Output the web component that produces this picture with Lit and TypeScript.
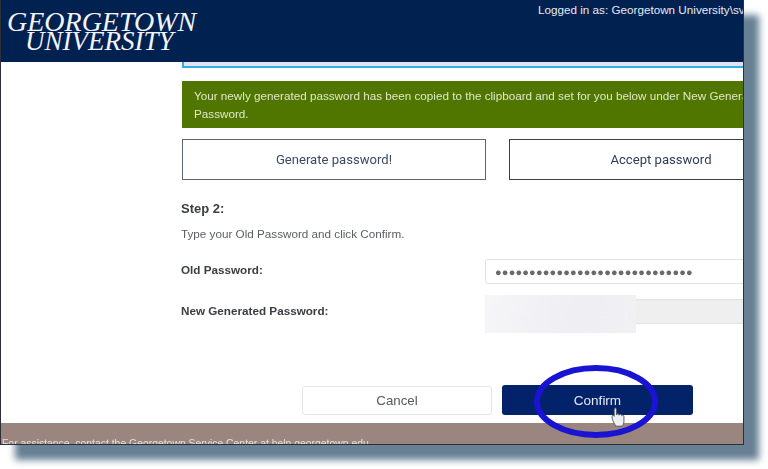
import { LitElement, html, css, svg } from "lit";
import { customElement } from "lit/decorators.js";

@customElement("app-root")
export class AppRoot extends LitElement {
  static styles = css`
    :host { display: block; width: 768px; height: 469px; background: #fff; overflow: hidden; font-family: "Liberation Sans", Arial, sans-serif; position: relative; }
    .window { width: 744px; height: 445px; box-sizing: border-box; border: 1px solid #2c3036; border-top: 0; background: #fff; display: flex; flex-direction: column; overflow: hidden; box-shadow: 15px 15px 7px 0 #678094; position: relative; }
    .soft { filter: blur(0.4px); display: flex; flex-direction: column; flex: 1; min-height: 0; }
    header { height: 62px; flex: none; background: #012150; color: #e6ebf2; position: relative; }
    .logo { font-family: "Liberation Serif", serif; font-style: italic; color: #f2f4f7; padding: 11px 0 0 6px; white-space: nowrap; }
    .logo div { line-height: 21px; height: 20px; }
    .l1 { font-size: 28px; }
    .l2 { font-size: 27px; padding-left: 18px; }
    .user { font-size: 11.7px; position: absolute; left: 537px; top: 3px; white-space: nowrap; width: 205px; overflow: hidden; line-height: 14px; }
    main { flex: 1; padding-left: 181px; min-height: 0; display: flex; flex-direction: column; overflow: hidden; }
    .strip { height: 4px; flex: none; background: #dfe3ef; border-left: 2px solid #35aedb; border-bottom: 2px solid #35aedb; }
    .banner { margin-top: 13px; height: 47px; flex: none; box-sizing: border-box; background: #507600; color: #dfe8c6; font-size: 11.7px; line-height: 18px; padding: 6px 0 0 12px; white-space: nowrap; }
    .actions { margin-top: 11px; display: flex; gap: 23px; flex: none; }
    .btn { width: 304px; height: 41px; flex: none; box-sizing: border-box; border: 1px solid #5c6672; display: flex; align-items: center; justify-content: center; font-family: Roboto, sans-serif; font-size: 13.1px; color: #3b4a60; }
    .actions .btn:last-child { border-color: #3a4048; color: #2f3d55; }
    h2 { margin: 21px 0 0 -1px; font-size: 13px; line-height: 16px; color: #3a3d42; font-weight: bold; }
    p { margin: 10px 0 0 -1px; font-size: 11.7px; line-height: 14px; color: #5c6066; }
    .row { display: flex; align-items: center; flex: none; height: 26px; margin: 17px 0 0 -1px; }
    .row + .row { margin-top: 14px; }
    label { width: 304px; flex: none; font-size: 11.7px; font-weight: bold; color: #3a3d42; }
    .up { padding-bottom: 4px; }
    .down { padding-bottom: 2px; }
    .input { width: 300px; height: 25px; box-sizing: border-box; flex: none; border: 1px solid #e2e2e4; border-radius: 3px; font-size: 11px; padding-left: 9px; line-height: 24px; color: #666a6e; letter-spacing: 0.18px; white-space: nowrap; overflow: hidden; }
    .input.off { background: #efeff0; }
    .dialog { display: flex; gap: 10px; margin: 61px 0 0 120px; align-items: center; flex: none; }
    .dlg { height: 30px; flex: none; box-sizing: border-box; border-radius: 3px; display: flex; align-items: center; justify-content: center; }
    .cancel { width: 190px; height: 29px; margin-top: 1px; font-size: 13.3px; border: 1px solid #e6e6e8; color: #55585c; }
    .confirm { width: 191px; font-size: 13.5px; background: #02226a; color: #e4e9f4; }
    footer { margin-top: auto; height: 21px; flex: none; background: #9b857f; color: #e6dfdc; font-size: 10.4px; line-height: 14px; padding: 14px 0 0 1px; box-sizing: border-box; white-space: nowrap; overflow: hidden; }
    .mask { position: absolute; left: 484px; top: 295px; width: 151px; height: 38px; background: linear-gradient(100deg, #f6f6f8, #eeeef3 60%, #f1f1f4); filter: blur(0.6px); }
    .mark { position: absolute; left: 529px; top: 360px; pointer-events: none; }
  `;

  render() {
    return html`
      <div class="window">
        <div class="soft">
          <header>
            <div class="logo"><div class="l1">GEORGETOWN</div><div class="l2">UNIVERSITY</div></div>
            <div class="user">Logged in as: Georgetown University\\svc</div>
          </header>
          <main>
            <div class="strip"></div>
            <div class="banner">Your newly generated password has been copied to the clipboard and set for you below under New Generated<br />Password.</div>
            <div class="actions">
              <div class="btn">Generate password!</div>
              <div class="btn">Accept password</div>
            </div>
            <h2>Step 2:</h2>
            <p>Type your Old Password and click Confirm.</p>
            <div class="row"><label class="up">Old Password:</label><div class="input">${"●".repeat(29)}</div></div>
            <div class="row"><label class="down">New Generated Password:</label><div class="input off"></div></div>
            <div class="dialog">
              <div class="dlg cancel">Cancel</div>
              <div class="dlg confirm">Confirm</div>
            </div>
          </main>
          <footer>For assistance, contact the Georgetown Service Center at help.georgetown.edu</footer>
        </div>
        <div class="mask"></div>
        <svg class="mark" width="135" height="85" viewBox="0 0 135 85">
          ${svg`<ellipse cx="66" cy="41.5" rx="59" ry="33.5" fill="none" stroke="#1a14d2" stroke-width="6"/>
          <g transform="translate(18.2 9.9) scale(0.75)"><path d="M85 62 C85 60 88 60 88 62 L88 54 C88 49.500 91 49.500 91 54 L91 60 C92 58 94 58 94.500 60.500 C95.500 58.500 97.500 59 98 61 C99 59.500 101 60 101 62.500 L101 69 C101 72 99 74 98.500 75 L90 75 C89 72 85 68 85 62 Z" fill="#eef0f4" stroke="#4a5058" stroke-width="1.200"/></g>`}
        </svg>
      </div>
    `;
  }
}
